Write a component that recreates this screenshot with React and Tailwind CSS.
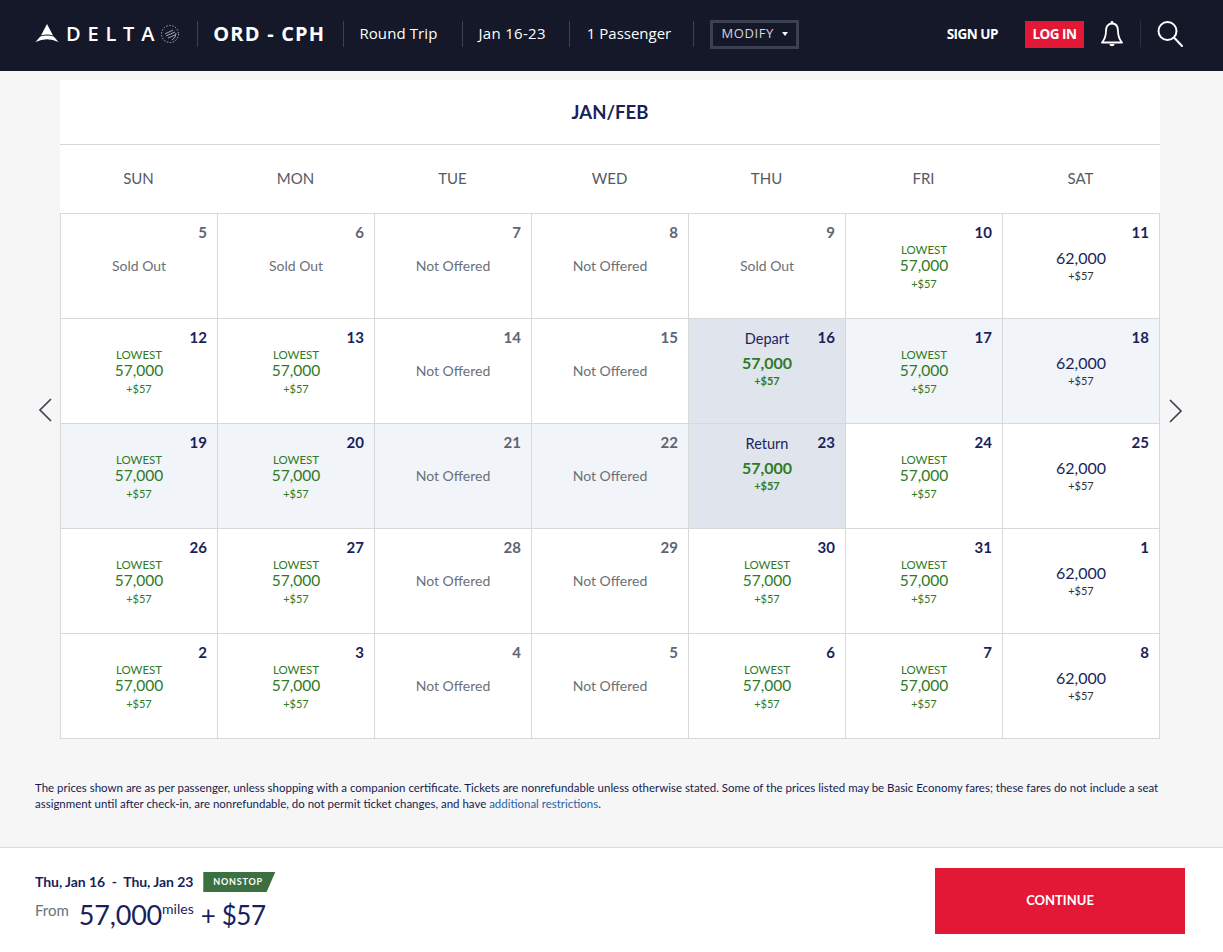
const DAYS = ['SUN', 'MON', 'TUE', 'WED', 'THU', 'FRI', 'SAT'];

const L = 'low';
const H = 'high';
const N = 'none';
const S = 'sold';

const CELLS = [
  [5, S], [6, S], [7, N], [8, N], [9, S], [10, L], [11, H],
  [12, L], [13, L], [14, N], [15, N], [16, 'depart'], [17, L, 1], [18, H, 1],
  [19, L, 1], [20, L, 1], [21, N, 1], [22, N, 1], [23, 'return'], [24, L], [25, H],
  [26, L], [27, L], [28, N], [29, N], [30, L], [31, L], [1, H],
  [2, L], [3, L], [4, N], [5, N], [6, L], [7, L], [8, H],
];

const Logo = () => (
  <div className="flex items-center">
    <svg width="24" height="20" viewBox="0 0 24 20" className="mr-[7px]">
      <path d="M12 0 L18 11.5 Q12 9.5 6 11.5 Z" fill="#fff" />
      <path d="M5.3 12.5 Q12 10.5 18.7 12.5 L23.5 18 Q12 12.5 0.5 18 Z" fill="#fff" />
    </svg>
    <span className="text-[20px] font-semibold tracking-[6.8px] text-white leading-none">DELTA</span>
    <svg width="20" height="20" viewBox="0 0 20 20" className="ml-[-1px]" fill="none" stroke="#c9ccd4" strokeWidth="0.8">
      <circle cx="10" cy="10" r="8.5" strokeDasharray="1.5 1.5" />
      <path d="M5 10 L13 6 M6 12 L15 8 M8 14 L15 11 M12 16 Q16 14 16 9" />
    </svg>
  </div>
);

const Sep = () => <div className="w-px h-[26px] bg-[#3c4152]" />;

const BellIcon = () => (
  <svg width="24" height="28" viewBox="0 0 24 28" fill="none" stroke="#fff" strokeWidth="1.8" strokeLinejoin="round">
    <path d="M12 3.5 C7.5 3.5 6 7 6 11 C6 16 5 19 2 22.5 H22 C19 19 18 16 18 11 C18 7 16.5 3.5 12 3.5 Z" />
    <circle cx="12" cy="2.5" r="1.4" fill="#fff" stroke="none" />
    <path d="M9.5 24 H14.5 C14.5 27 9.5 27 9.5 24 Z" fill="#fff" stroke="none" />
  </svg>
);

const SearchIcon = () => (
  <svg width="26" height="26" viewBox="0 0 26 26" fill="none" stroke="#fff" strokeWidth="2" strokeLinecap="round">
    <circle cx="10.5" cy="10" r="9" />
    <path d="M17 16.5 L25 25" />
  </svg>
);

const Header = () => (
  <header className="h-[71px] bg-[#141829] flex items-center pl-[35px] pr-[40px] pb-[3px] shrink-0 font-['Open_Sans',sans-serif]">
    <Logo />
    <div className="ml-[17px] mr-[15px]"><Sep /></div>
    <span className="text-[20px] font-bold tracking-[1.2px] text-white pb-[1px]">ORD - CPH</span>
    <div className="ml-[18px] mr-[15px]"><Sep /></div>
    <span className="text-[15px] tracking-[0.1px] text-white pb-[2px]">Round Trip</span>
    <div className="ml-[24px] mr-[16px]"><Sep /></div>
    <span className="text-[15px] tracking-[0.3px] text-white pb-[2px]">Jan 16-23</span>
    <div className="ml-[23px] mr-[17px]"><Sep /></div>
    <span className="text-[15px] text-white pb-[2px]">1 Passenger</span>
    <div className="ml-[22px] mr-[16px]"><Sep /></div>
    <button className="h-[29px] w-[89px] border-[3px] border-[#3c4152] flex items-center justify-center text-[13px] tracking-[0.6px] text-[#d5d7dc]">
      MODIFY
      <span className="ml-[8px] w-0 h-0 border-x-[3px] border-x-transparent border-t-[4px] border-t-white" />
    </button>
    <span className="ml-auto text-[13.5px] font-bold tracking-[-0.5px] text-white">SIGN UP</span>
    <span className="ml-[27px] w-[59px] h-[27px] bg-[#e31837] flex items-center justify-center text-[13.5px] font-bold tracking-[-0.5px] text-white">LOG IN</span>
    <div className="ml-[16px]"><BellIcon /></div>
    <div className="ml-[16px] mr-[16px] w-px h-[26px] bg-[#2a2e3e]" />
    <SearchIcon />
  </header>
);

const Cell = ({ num, kind, tint }) => {
  const selected = kind === 'depart' || kind === 'return';
  const grey = kind === 'sold' || kind === 'none';
  const bg = selected ? 'bg-[#e0e4ec]' : tint ? 'bg-[#f1f4f8]' : 'bg-white';
  return (
    <div className={`relative border-r border-b border-[#d8d8d8] flex flex-col items-center justify-center ${bg}`}>
      <span className={`absolute top-[8px] right-[10px] text-[15px] font-bold leading-[20px] ${grey ? 'text-[#5e6472]' : 'text-[#1a1f5c]'}`}>{num}</span>
      {kind === 'sold' && <span className="text-[14px] text-[#6b7078] mb-[1px]">Sold Out</span>}
      {kind === 'none' && <span className="text-[14px] text-[#6b7078] mb-[1px]">Not Offered</span>}
      {kind === 'low' && (
        <div className="flex flex-col items-center text-[#2f7a25] pt-[2px]">
          <span className="text-[11.5px] leading-[14px]">LOWEST</span>
          <span className="text-[15.5px] leading-[18px] mt-[-1px]">57,000</span>
          <span className="text-[11px] leading-[16px] mt-[2px]">+$57</span>
        </div>
      )}
      {kind === 'high' && (
        <div className="flex flex-col items-center pb-[1px]">
          <span className="text-[16px] leading-[20px] text-[#1a1f5c]">62,000</span>
          <span className="text-[11px] leading-[16px] text-[#333]">+$57</span>
        </div>
      )}
      {selected && (
        <div className="flex flex-col items-center pb-[25px]">
          <span className="text-[14.5px] leading-[20px] text-[#1a1f5c]">{kind === 'depart' ? 'Depart' : 'Return'}</span>
          <span className="text-[16px] font-bold leading-[20px] text-[#2f7a25] mt-[4px]">57,000</span>
          <span className="text-[11px] font-bold leading-[15px] text-[#2f7a25]">+$57</span>
        </div>
      )}
    </div>
  );
};

const Calendar = () => (
  <div className="w-[1100px] bg-white">
    <div className="h-[65px] border-b border-[#d8d8d8] flex items-center justify-center pt-[2px] text-[18.5px] font-bold text-[#1a1f5c]">JAN/FEB</div>
    <div className="grid grid-cols-[repeat(7,157px)] h-[68px] items-center pb-[2px]">
      {DAYS.map((d) => (
        <div key={d} className="text-center text-[15px] text-[#555a66]">{d}</div>
      ))}
    </div>
    <div className="grid grid-cols-[repeat(7,157px)] auto-rows-[105px] border-l border-t border-[#d8d8d8] w-[1100px]">
      {CELLS.map(([num, kind, tint], i) => (
        <Cell key={i} num={num} kind={kind} tint={tint} />
      ))}
    </div>
  </div>
);

const Footer = () => (
  <footer className="h-[105px] bg-white border-t border-[#dcdcdc] flex items-start justify-between pl-[35px] pr-[38px] pt-[20px] shrink-0">
    <div>
      <div className="flex items-center h-[20px] mt-[4px]">
        <span className="text-[14px] tracking-[-0.06px] font-bold text-[#1a1f5c] pb-[1px]">Thu, Jan 16&nbsp; -&nbsp; Thu, Jan 23</span>
        <span className="ml-[10px] h-[20px] w-[72px] bg-[#3d7040] [clip-path:polygon(0_0,100%_0,88%_100%,0_100%)] flex items-center pl-[10px] text-[9px] font-bold tracking-[0.8px] text-white">NONSTOP</span>
      </div>
      <div className="flex items-baseline mt-[5px] text-[#1a1f5c]">
        <span className="text-[15px] text-[#6b7078] mr-[10px] self-start mt-[2px]">From</span>
        <span className="text-[27px] tracking-[-0.2px] leading-[36px]">57,000</span>
        <span className="text-[14px] self-start mt-[1px]">miles</span>
        <span className="text-[26px] tracking-[-0.4px] leading-[36px] ml-[7px]">+ $57</span>
      </div>
    </div>
    <button className="w-[250px] h-[66px] bg-[#e31837] text-white text-[13px] font-bold pb-[1px]">CONTINUE</button>
  </footer>
);

const ArrowLeft = () => (
  <svg width="14" height="24" viewBox="0 0 14 24" fill="none" stroke="#3f4450" strokeWidth="1.7">
    <path d="M13 1 L2 12 L13 23" />
  </svg>
);

const ArrowRight = () => (
  <svg width="14" height="24" viewBox="0 0 14 24" fill="none" stroke="#3f4450" strokeWidth="1.7">
    <path d="M1 1 L12 12 L1 23" />
  </svg>
);

export default function App() {
  return (
    <div className="h-[952px] flex flex-col bg-[#f6f6f6] overflow-hidden font-['Lato',sans-serif]">
      <Header />
      <main className="flex-1 flex flex-col pt-[9px]">
        <div className="flex">
          <div className="w-[60px] flex items-center pl-[38px]">
            <ArrowLeft />
          </div>
          <Calendar />
          <div className="flex-1 flex items-center pl-[9px] pt-[2px]">
            <ArrowRight />
          </div>
        </div>
        <p className="ml-[35px] w-[1130px] mt-[41px] text-[11.47px] leading-[16px] text-[#141a50]">
          The prices shown are as per passenger, unless shopping with a companion certificate. Tickets are nonrefundable unless otherwise stated. Some of the prices listed may be Basic Economy fares; these fares do not include a seat assignment until after check-in, are nonrefundable, do not permit ticket changes, and have <span className="text-[#2b5fa8]">additional restrictions</span>.
        </p>
      </main>
      <Footer />
    </div>
  );
}
